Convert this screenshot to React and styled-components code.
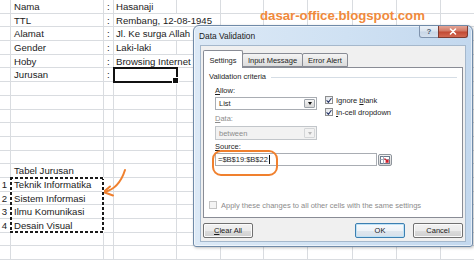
import React from "react";
import styled, { createGlobalStyle, css } from "styled-components";

const GlobalStyle = createGlobalStyle`
  html, body { margin: 0; padding: 0; background: #fff; }
  body { width: 474px; height: 260px; overflow: hidden; font-family: "Liberation Sans", Arial, sans-serif; }
  * { box-sizing: border-box; }
`;

const Stage = styled.div`
  position: relative;
  width: 474px;
  height: 260px;
  overflow: hidden;
  background: #fff;
`;

/* ---------- spreadsheet ---------- */
const Sheet = styled.div`
  display: grid;
  grid-template-columns: 11px 93px 10px 63px 44px 43px 44px 45px 44px 44px 44px;
  grid-template-rows: repeat(19, 13.7px);
  font-family: "Liberation Sans", Arial, sans-serif;
  font-size: 9.6px;
  color: #1b1b1b;
`;

const Cell = styled.div`
  position: relative;
  grid-column: span ${(p) => p.$span || 1};
  border-right: 1px solid #d9dce0;
  border-bottom: 1px solid #d9dce0;
  padding-left: ${(p) => p.$pad || 0}px;
  padding-right: ${(p) => (p.$right ? 3 : 0)}px;
  text-align: ${(p) => (p.$right ? "right" : "left")};
  line-height: 13px;
  white-space: nowrap;
  ${(p) =>
    p.$selected &&
    css`
      z-index: 2;
      outline: 2px solid #111;
      outline-offset: -1px;
      &::after {
        content: "";
        position: absolute;
        right: -3px;
        bottom: -3px;
        width: 5px;
        height: 5px;
        background: #111;
        border: 1px solid #fff;
      }
    `}
`;

const Marquee = styled.div`
  position: absolute;
  left: -1px;
  top: -1px;
  width: 94px;
  height: 56px;
  pointer-events: none;
  z-index: 3;
  background:
    repeating-linear-gradient(90deg, #1a1a1a 0 3px, #fff 3px 5px) top left / 100% 2px no-repeat,
    repeating-linear-gradient(90deg, #1a1a1a 0 3px, #fff 3px 5px) bottom left / 100% 2px no-repeat,
    repeating-linear-gradient(180deg, #1a1a1a 0 3px, #fff 3px 5px) top left / 2px 100% no-repeat,
    repeating-linear-gradient(180deg, #1a1a1a 0 3px, #fff 3px 5px) top right / 2px 100% no-repeat;
`;

const Watermark = styled.div`
  position: absolute;
  left: 260px;
  top: 8px;
  font-family: "Liberation Sans", Arial, sans-serif;
  font-weight: bold;
  font-size: 13.2px;
  line-height: 15px;
  color: #f08a3c;
  white-space: nowrap;
`;

const ArrowSvg = styled.svg`
  position: absolute;
  left: 100px;
  top: 165px;
  overflow: visible;
`;

const Highlight = styled.div`
  position: absolute;
  left: 212px;
  top: 150px;
  width: 66px;
  height: 26px;
  border: 2.5px solid #f0802e;
  border-radius: 9px;
  pointer-events: none;
`;

/* ---------- dialog window ---------- */
const Window = styled.div`
  position: absolute;
  left: 193px;
  top: 25px;
  width: 280px;
  height: 222px;
  border: 1px solid #6f8aa8;
  border-radius: 6px 6px 3px 3px;
  background: linear-gradient(90deg, #dce9f6 0%, #cfe1f3 55%, #c3d8ee 100%);
  box-shadow: 1px 1px 3px rgba(0, 0, 0, 0.25), inset 0 0 0 1px rgba(255, 255, 255, 0.6);
  display: flex;
  flex-direction: column;
  font-family: "Liberation Sans", Arial, sans-serif;
  font-size: 7.5px;
  color: #1e1e1e;
`;

const TitleBar = styled.div`
  height: 19px;
  display: flex;
  align-items: flex-start;
  padding: 0 4px 0 5px;
`;

const Title = styled.div`
  flex: 1;
  margin-top: 5px;
  font-size: 8.4px;
  line-height: 10px;
  color: #1a1a1a;
`;

const CaptionButton = styled.div`
  width: ${(p) => (p.$close ? 30 : 20)}px;
  height: 12px;
  display: flex;
  align-items: center;
  justify-content: center;
  border: 1px solid ${(p) => (p.$close ? "#7d3a30" : "#7f93ad")};
  border-top: none;
  border-radius: ${(p) => (p.$close ? "0 0 3px 0" : "0 0 0 3px")};
  margin-left: ${(p) => (p.$close ? -1 : 0)}px;
  background: ${(p) =>
    p.$close
      ? "linear-gradient(180deg, #e3a495 0%, #d27a66 45%, #c24a34 55%, #d36a52 100%)"
      : "linear-gradient(180deg, #eef3f9 0%, #dbe5f0 45%, #c8d6e6 55%, #d6e2ef 100%)"};
  color: ${(p) => (p.$close ? "#fff" : "#4a5b70")};
  font-size: 8px;
  font-weight: bold;
`;

const Client = styled.div`
  flex: 1;
  margin: 0 6px 4px 6px;
  border: 1px solid #a5b8cc;
  background: #f0f0f0;
  padding: 4px 2px 0 2px;
  display: flex;
  flex-direction: column;
`;

const Tabs = styled.div`
  height: 17px;
  display: flex;
  align-items: flex-end;
  position: relative;
  z-index: 2;
`;

const Tab = styled.div`
  width: ${(p) => p.$w}px;
  height: ${(p) => (p.$active ? 18 : 14)}px;
  margin-bottom: ${(p) => (p.$active ? -1 : 0)}px;
  margin-left: ${(p) => (p.$first ? 0 : -1)}px;
  border: 1px solid #898c95;
  border-bottom: ${(p) => (p.$active ? "none" : "1px solid #898c95")};
  border-radius: 2px 2px 0 0;
  background: ${(p) => (p.$active ? "#fff" : "linear-gradient(180deg, #f4f4f4 0%, #e8e8e8 50%, #dcdcdc 100%)")};
  display: flex;
  justify-content: center;
  padding-top: ${(p) => (p.$active ? 5 : 2)}px;
  line-height: 10px;
  white-space: nowrap;
`;

const Panel = styled.div`
  height: 151px;
  border: 1px solid #898c95;
  background: #fff;
  padding: 0 5px 6px 5px;
  display: flex;
  flex-direction: column;
`;

const Legend = styled.div`
  margin-top: 4px;
  height: 10px;
  line-height: 10px;
  display: flex;
  align-items: center;
  &::after {
    content: "";
    flex: 1;
    height: 1px;
    margin-left: 5px;
    background: #d5dde5;
  }
`;

const Criteria = styled.div`
  margin-left: 6px;
  display: grid;
  grid-template-columns: 102px 1fr;
  column-gap: 8px;
`;

const Column = styled.div`
  display: flex;
  flex-direction: column;
  padding-top: ${(p) => p.$pt || 0}px;
`;

const Label = styled.div`
  margin-top: ${(p) => p.$mt || 0}px;
  height: 10px;
  line-height: 10px;
  color: ${(p) => (p.$disabled ? "#8c8c8c" : "#1e1e1e")};
  white-space: nowrap;
`;

const U = styled.span`
  text-decoration: underline;
  text-underline-offset: 1px;
`;

const Combo = styled.div`
  margin-top: ${(p) => p.$mt || 0}px;
  height: ${(p) => p.$h || 13}px;
  display: flex;
  align-items: stretch;
  border: 1px solid ${(p) => (p.$disabled ? "#c2c6ca" : "#a9adb3")};
  background: ${(p) => (p.$disabled ? "#f2f2f2" : "#fff")};
  color: ${(p) => (p.$disabled ? "#8c8c8c" : "#1e1e1e")};
  padding: 1px;
`;

const ComboText = styled.div`
  flex: 1;
  padding-left: 2px;
  line-height: ${(p) => p.$lh || 10}px;
`;

const ComboButton = styled.div`
  width: 11px;
  display: flex;
  align-items: center;
  justify-content: center;
  border: 1px solid ${(p) => (p.$disabled ? "#d4d6d8" : "#9da3aa")};
  border-radius: 1px;
  background: ${(p) =>
    p.$disabled ? "#f2f2f2" : "linear-gradient(180deg, #f6f6f6 0%, #e6e6e6 50%, #d8d8d8 100%)"};
  &::before {
    content: "";
    border-left: 2.5px solid transparent;
    border-right: 2.5px solid transparent;
    border-top: 3px solid ${(p) => (p.$disabled ? "#b8b8b8" : "#111")};
  }
`;

const CheckRow = styled.div`
  height: 12px;
  display: flex;
  align-items: center;
  gap: 3px;
  color: ${(p) => (p.$disabled ? "#8c8c8c" : "#1e1e1e")};
  white-space: nowrap;
`;

const Box = styled.div`
  width: 8px;
  height: 8px;
  flex: none;
  border: 1px solid ${(p) => (p.$disabled ? "#c4c4c4" : "#8e8f8f")};
  background: ${(p) =>
    p.$disabled ? "#f4f4f4" : "linear-gradient(135deg, #dfe3e8 0%, #f3f4f6 60%, #ffffff 100%)"};
  display: flex;
  align-items: center;
  justify-content: center;
`;

const SourceRow = styled.div`
  margin-top: 1px;
  margin-left: 6px;
  display: flex;
  gap: 1px;
  align-items: center;
`;

const SourceInput = styled.div`
  width: 162px;
  height: 13px;
  border: 1px solid #a9adb3;
  background: #fff;
  padding-left: 2px;
  line-height: 11px;
  display: flex;
  align-items: center;
`;

const Caret = styled.span`
  display: inline-block;
  width: 1px;
  height: 9px;
  background: #111;
  margin-left: 1px;
`;

const RefButton = styled.div`
  width: 14px;
  height: 12px;
  border: 1px solid #8f959c;
  border-radius: 2px;
  background: linear-gradient(180deg, #f4f4f4 0%, #e4e4e4 50%, #d6d6d6 100%);
  display: flex;
  align-items: center;
  justify-content: center;
`;

const ApplyRow = styled(CheckRow)`
  margin-top: auto;
  gap: 4px;
`;

const Buttons = styled.div`
  margin-top: 5px;
  display: flex;
  justify-content: space-between;
`;

const ButtonGroup = styled.div`
  display: flex;
  gap: 8px;
`;

const Button = styled.div`
  width: 50px;
  height: 15px;
  border: 1px solid ${(p) => (p.$default ? "#3c7fb1" : "#707070")};
  border-radius: 2px;
  background: ${(p) =>
    p.$default
      ? "linear-gradient(180deg, #f7fafd 0%, #eef3f8 50%, #dfe7ef 50%, #d6e0ea 100%)"
      : "linear-gradient(180deg, #f2f2f2 0%, #ebebeb 50%, #dddddd 50%, #cfcfcf 100%)"};
  box-shadow: ${(p) => (p.$default ? "inset 0 0 0 1px #bfe2f6" : "inset 0 0 0 1px #fbfbfb")};
  display: flex;
  align-items: center;
  justify-content: center;
  color: #1a1a1a;
`;

/* ---------- data ---------- */
const info = [
  { label: "Nama", value: "Hasanaji" },
  { label: "TTL", value: "Rembang, 12-08-1945", span: 2 },
  { label: "Alamat", value: "Jl. Ke surga Allah", span: 2 },
  { label: "Gender", value: "Laki-laki" },
  { label: "Hoby", value: "Browsing Internet", span: 2 },
  { label: "Jurusan", value: "", selected: true },
];

const majors = ["Teknik Informatika", "Sistem Informasi", "Ilmu Komunikasi", "Desain Visual"];

const COLS = 11;
const ROWS = 19;

function sheetRow(r) {
  const cells = [];
  let used = 0;
  const push = (el, span = 1) => {
    cells.push(el);
    used += span;
  };
  if (r < info.length) {
    const it = info[r];
    push(<Cell key="a" />);
    push(<Cell key="b" $pad={3}>{it.label}</Cell>);
    push(<Cell key="c" $pad={3}>:</Cell>);
    push(
      <Cell key="d" $pad={2} $span={it.span} $selected={it.selected}>
        {it.value}
      </Cell>,
      it.span || 1
    );
  } else if (r === 12) {
    push(<Cell key="a" />);
    push(<Cell key="b" $pad={3}>Tabel Jurusan</Cell>);
  } else if (r >= 13 && r <= 16) {
    const i = r - 13;
    push(<Cell key="a" $right>{i + 1}</Cell>);
    push(
      <Cell key="b" $pad={3}>
        {majors[i]}
        {i === 0 && <Marquee />}
      </Cell>
    );
  }
  for (let c = used; c < COLS; c++) cells.push(<Cell key={"e" + c} />);
  return cells;
}

const Check = () => (
  <svg width="7" height="7" viewBox="0 0 7 7">
    <path d="M1 3.6 L2.8 5.6 L6 1.2" fill="none" stroke="#2b3a6b" strokeWidth="1.3" strokeLinecap="round" strokeLinejoin="round" />
  </svg>
);

export default function App() {
  return (
    <>
      <GlobalStyle />
      <Stage>
        <Sheet>{Array.from({ length: ROWS }, (_, r) => sheetRow(r))}</Sheet>

        <Watermark>dasar-office.blogspot.com</Watermark>

        <ArrowSvg width="30" height="35" viewBox="0 0 30 35">
          <path d="M25 5 Q19 24 4 27" fill="none" stroke="#f0802e" strokeWidth="2" strokeLinecap="round" />
          <path d="M10 21.5 L3.5 27 L13 30.5" fill="none" stroke="#f0802e" strokeWidth="2" strokeLinecap="round" strokeLinejoin="round" />
        </ArrowSvg>

        <Window>
          <TitleBar>
            <Title>Data Validation</Title>
            <CaptionButton>?</CaptionButton>
            <CaptionButton $close>
              <svg width="8" height="7" viewBox="0 0 8 7">
                <path d="M1.5 1 L6.5 6 M6.5 1 L1.5 6" stroke="#fff" strokeWidth="1.6" strokeLinecap="round" />
              </svg>
            </CaptionButton>
          </TitleBar>
          <Client>
            <Tabs>
              <Tab $active $first $w={40}>Settings</Tab>
              <Tab $w={61}>Input Message</Tab>
              <Tab $w={46}>Error Alert</Tab>
            </Tabs>
            <Panel>
              <Legend>Validation criteria</Legend>
              <Criteria>
                <Column>
                  <Label $mt={4}>
                    <U>A</U>llow:
                  </Label>
                  <Combo $mt={1} $h={13}>
                    <ComboText>List</ComboText>
                    <ComboButton />
                  </Combo>
                  <Label $mt={4} $disabled>
                    <U>D</U>ata:
                  </Label>
                  <Combo $mt={2} $h={14} $disabled>
                    <ComboText $lh={11}>between</ComboText>
                    <ComboButton $disabled />
                  </Combo>
                </Column>
                <Column $pt={12}>
                  <CheckRow>
                    <Box>
                      <Check />
                    </Box>
                    <span>
                      Ignore <U>b</U>lank
                    </span>
                  </CheckRow>
                  <CheckRow>
                    <Box>
                      <Check />
                    </Box>
                    <span>
                      <U>I</U>n-cell dropdown
                    </span>
                  </CheckRow>
                </Column>
              </Criteria>
              <Label $mt={2} style={{ marginLeft: 6 }}>
                <U>S</U>ource:
              </Label>
              <SourceRow>
                <SourceInput>
                  =$B$19:$B$22
                  <Caret />
                </SourceInput>
                <RefButton>
                  <svg width="10" height="8" viewBox="0 0 10 8">
                    <rect x="0.5" y="0.5" width="9" height="7" fill="#fff" stroke="#6b7a8c" />
                    <path d="M0.5 3.5 H9.5 M3.5 0.5 V7.5" stroke="#a4b0be" strokeWidth="1" />
                    <path d="M4.5 2.5 L8 6 M8 3.5 V6 H5.5" fill="none" stroke="#d11f2a" strokeWidth="1.3" />
                  </svg>
                </RefButton>
              </SourceRow>
              <ApplyRow $disabled>
                <Box $disabled />
                <span>Apply these changes to all other cells with the same settings</span>
              </ApplyRow>
            </Panel>
            <Buttons>
              <Button>
                <span>
                  <U>C</U>lear All
                </span>
              </Button>
              <ButtonGroup>
                <Button $default>OK</Button>
                <Button>Cancel</Button>
              </ButtonGroup>
            </Buttons>
          </Client>
        </Window>

        <Highlight />
      </Stage>
    </>
  );
}
